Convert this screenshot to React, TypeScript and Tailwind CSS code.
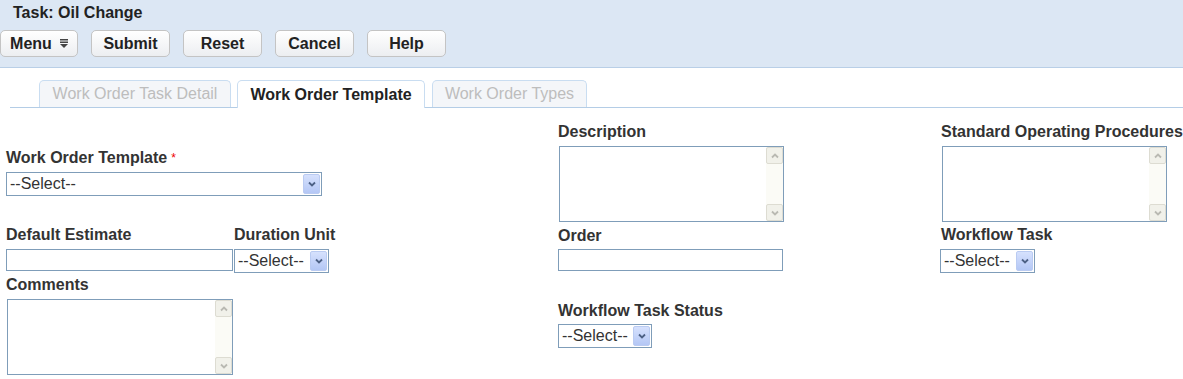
import React from "react";

const font = { fontFamily: '"Liberation Sans", Arial, sans-serif' };

function Chevron({ up = false, color }: { up?: boolean; color: string }) {
  return (
    <svg width="8" height="6" viewBox="0 0 8 6" className={up ? "rotate-180" : ""}>
      <path d="M1 1.5 L4 4.5 L7 1.5" fill="none" stroke={color} strokeWidth="1.8" />
    </svg>
  );
}

function Select({ w }: { w: string }) {
  return (
    <div className={`${w} h-[24px] border border-[#7f9db9] bg-white flex items-center justify-between pl-[3px] pr-[1px]`}>
      <span className="text-[16px] text-[#333] leading-none">--Select--</span>
      <div className="w-[17px] h-[20px] bg-gradient-to-b from-[#d6e1fd] to-[#b4c7f5] border border-[#bacbf2] rounded-[2px] flex items-center justify-center">
        <Chevron color="#4d6185" />
      </div>
    </div>
  );
}

function TextArea({ w }: { w: string }) {
  return (
    <div className={`${w} h-[76px] border border-[#7f9db9] bg-white flex justify-end`}>
      <div className="w-[17px] h-full bg-[#fbfbf6] flex flex-col justify-between">
        <div className="h-[17px] border border-[#dddcd2] rounded-[2px] bg-[#f1f1ea] flex items-center justify-center">
          <Chevron up color="#b9b9b2" />
        </div>
        <div className="h-[17px] border border-[#dddcd2] rounded-[2px] bg-[#f1f1ea] flex items-center justify-center">
          <Chevron color="#b9b9b2" />
        </div>
      </div>
    </div>
  );
}

function Input({ w }: { w: string }) {
  return <div className={`${w} h-[22px] border border-[#7f9db9] bg-white`} />;
}

function Label({ children }: { children: React.ReactNode }) {
  return (
    <div className="text-[16px] font-bold text-[#333] leading-[16px] whitespace-nowrap">
      {children}
    </div>
  );
}

function Btn({ children, w }: { children: React.ReactNode; w: string }) {
  return (
    <div
      className={`${w} h-[27px] border border-[#c4c4c4] rounded-[5px] bg-gradient-to-b from-white to-[#eceef1] flex items-center justify-center text-[16px] font-bold text-[#222]`}
    >
      {children}
    </div>
  );
}

export default function App() {
  return (
    <div style={font} className="w-[1183px] h-[379px] bg-white overflow-hidden">
      {/* Header */}
      <div className="h-[68px] bg-[#dce7f4] border-b border-[#b9cfe7]">
        <div className="pl-[13px] pt-[4px] text-[16px] font-bold text-[#222] leading-[17px]">
          Task: Oil Change
        </div>
        <div className="flex gap-[13px] mt-[9px]">
          <Btn w="w-[78px]">
            <span className="flex items-center gap-[8px]">
              Menu
              <svg width="8" height="9" viewBox="0 0 8 9">
                <rect x="0" y="0" width="8" height="1.5" fill="#444" />
                <rect x="0" y="2.5" width="8" height="1.5" fill="#444" />
                <path d="M0 5 L8 5 L4 9 Z" fill="#444" />
              </svg>
            </span>
          </Btn>
          <Btn w="w-[79px]">Submit</Btn>
          <Btn w="w-[79px]">Reset</Btn>
          <Btn w="w-[79px]">Cancel</Btn>
          <Btn w="w-[79px]">Help</Btn>
        </div>
      </div>

      {/* Tabs */}
      <div className="mt-[12px] ml-[10px] flex items-end border-b border-[#b4cde6] h-[28px] pl-[29px] gap-[6px]">
        <div className="w-[192px] h-[27px] border border-b-0 border-[#c9ddf1] rounded-t-[5px] bg-[#f4f6f9] flex items-center justify-center text-[16px] text-[#bdbdbd]">
          Work Order Task Detail
        </div>
        <div className="w-[188px] h-[28px] -mb-px border border-b-0 border-[#c9ddf1] rounded-t-[5px] bg-white flex items-center justify-center text-[16px] font-bold text-[#222]">
          Work Order Template
        </div>
        <div className="w-[155px] h-[27px] ml-[1px] border border-b-0 border-[#c9ddf1] rounded-t-[5px] bg-[#f4f6f9] flex items-center justify-center text-[16px] text-[#bdbdbd]">
          Work Order Types
        </div>
      </div>

      {/* Form */}
      <div className="flex pt-[16px] pl-[6px]">
        {/* Column 1 */}
        <div className="w-[552px] flex flex-col">
          <div className="mt-[26px] flex items-center">
            <Label>Work Order Template</Label>
            <span className="ml-[4px] text-[12px] text-[#e00] leading-none">*</span>
          </div>
          <div className="mt-[6px]">
            <Select w="w-[316px]" />
          </div>
          <div className="mt-[31px] flex">
            <div className="w-[228px] flex flex-col">
              <Label>Default Estimate</Label>
              <div className="mt-[6px]">
                <Input w="w-[227px]" />
              </div>
            </div>
            <div className="flex flex-col">
              <Label>Duration Unit</Label>
              <div className="mt-[6px]">
                <Select w="w-[95px]" />
              </div>
            </div>
          </div>
          <div className="mt-[4px]">
            <Label>Comments</Label>
          </div>
          <div className="mt-[6px] ml-[1px]">
            <TextArea w="w-[226px]" />
          </div>
        </div>

        {/* Column 2 */}
        <div className="w-[383px] flex flex-col">
          <Label>Description</Label>
          <div className="mt-[6px] ml-[1px]">
            <TextArea w="w-[225px]" />
          </div>
          <div className="mt-[6px]">
            <Label>Order</Label>
          </div>
          <div className="mt-[5px]">
            <Input w="w-[225px]" />
          </div>
          <div className="mt-[32px]">
            <Label>Workflow Task Status</Label>
          </div>
          <div className="mt-[5px]">
            <Select w="w-[94px]" />
          </div>
        </div>

        {/* Column 3 */}
        <div className="flex flex-col">
          <Label>Standard Operating Procedures</Label>
          <div className="mt-[6px] ml-[1px]">
            <TextArea w="w-[225px]" />
          </div>
          <div className="mt-[5px]">
            <Label>Workflow Task</Label>
          </div>
          <div className="mt-[6px] -ml-[1px]">
            <Select w="w-[95px]" />
          </div>
        </div>
      </div>
    </div>
  );
}
